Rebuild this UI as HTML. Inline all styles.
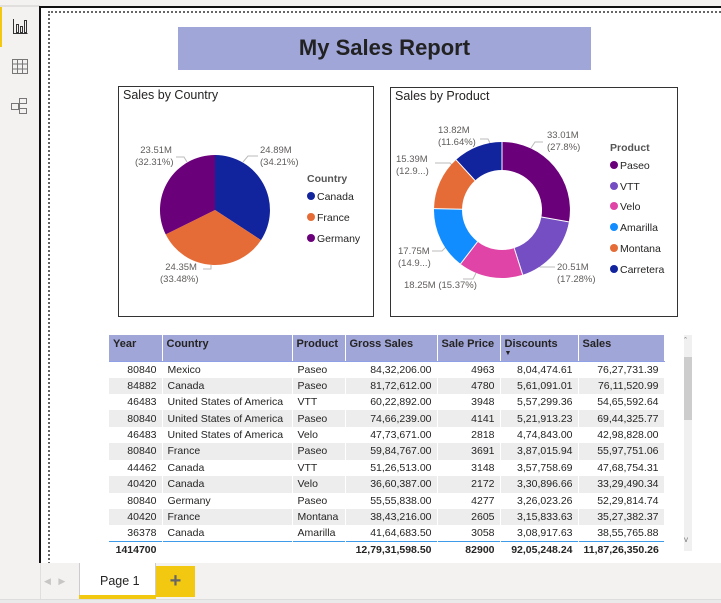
<!DOCTYPE html>
<html><head><meta charset="utf-8"><style>
*{margin:0;padding:0;box-sizing:border-box}
body{width:721px;height:603px;overflow:hidden;background:#f3f2f1;font-family:"Liberation Sans",sans-serif;position:relative;color:#252423}
.a{position:absolute}
.lbl{font-size:9.5px;color:#605e5c;line-height:12px;position:absolute;white-space:nowrap}
.leg{font-size:10.5px;position:absolute;white-space:nowrap}
.dot{display:inline-block;width:8px;height:8px;border-radius:50%;margin-right:2px;vertical-align:-0px}
table{border-collapse:collapse;font-size:10.5px;position:absolute;left:109px;top:335px;width:555px;table-layout:fixed}
th{background:#a0a6d8;text-align:left;font-weight:bold;height:26px;vertical-align:top;padding:3px 3px 0 4px;border-right:1px solid #fff;border-bottom:1px solid #8fa0e6;font-size:11px;white-space:nowrap;overflow:hidden;position:relative}
td{height:16.45px;padding:0 5px;white-space:nowrap;overflow:hidden;line-height:16px;border-right:1px solid #fff}
tr:nth-child(even) td{background:#ededed}
.r{text-align:right}
tfoot td{font-weight:bold;border-top:1.5px solid #3d9bea;background:#fff!important;height:16px}
</style></head><body>
<div class="a" style="left:0;top:0;width:721px;height:6px;background:#f3f2f1"></div>
<div class="a" style="left:0;top:5px;width:40px;height:2px;background:#e1dfdd"></div>
<div class="a" style="left:0;top:7px;width:2px;height:40px;background:#f2c811"></div>
<svg class="a" style="left:10px;top:16px" width="20" height="110" viewBox="0 0 20 110">
<g fill="none" stroke="#333" stroke-width="1">
<path d="M3.5 3v14.5h14"/><rect x="6.5" y="8.5" width="2" height="8"/><rect x="10.5" y="10.5" width="2" height="6"/><rect x="14.5" y="4.5" width="2" height="12"/>
</g>
<g fill="none" stroke="#777" stroke-width="1">
<rect x="2.5" y="43.5" width="15" height="14"/><path d="M2.5 48h15M2.5 53h15M7.5 43.5v14M12.5 43.5v14"/>
<rect x="1.5" y="87.5" width="7" height="6"/><rect x="9.5" y="82.5" width="7" height="5"/><rect x="9.5" y="92.5" width="7" height="5"/><path d="M8.5 90.5h1M9.5 85v10"/>
</g></svg>
<div class="a" style="left:39px;top:6px;width:682px;height:557px;background:#fff;border-left:2px solid #111;border-top:2px solid #111"></div>
<div class="a" style="left:48px;top:11px;width:680px;height:560px;border-left:2px dotted #666;border-top:2px dotted #666"></div>
<div class="a" style="left:178px;top:27px;width:413px;height:43px;background:#a0a6d8;text-align:center;font-weight:bold;font-size:22px;line-height:42px;color:#222">My Sales Report</div>
<div class="a" style="left:118px;top:86px;width:256px;height:231px;border:1px solid #333"></div>
<div class="a" style="left:123px;top:88px;font-size:12.5px;color:#252423">Sales by Country</div>
<svg class="a" style="left:0;top:0" width="721" height="603">
<path d="M215 210L215 155A55 55 0 0 1 261 240.1Z" fill="#12239e"/>
<path d="M215 210L261 240.1A55 55 0 0 1 165.7 234.4Z" fill="#e66c37"/>
<path d="M215 210L165.7 234.4A55 55 0 0 1 215 155Z" fill="#6b007b"/>
<g fill="none" stroke="#bbb" stroke-width="1">
<path d="M243 162l5-6h10"/><path d="M187 162l-3-5h-8"/><path d="M211 265v4h-8"/>
<path d="M531 148l4-6h8"/><path d="M490 143l-2-4h-8"/><path d="M455 168l-5-5h-15"/><path d="M447 246l-5 5h-10"/><path d="M476 273l-3 6h-10"/><path d="M535 261l5 6h15"/>
</g>
<path d="M502 142A68 68 0 0 1 568.9 221.9L541.4 217A40 40 0 0 0 502 170Z" fill="#6b007b"/>
<path d="M568.9 221.9A68 68 0 0 1 522.7 274.8L514.2 248.1A40 40 0 0 0 541.4 217Z" fill="#744ec2"/>
<path d="M522.7 274.8A68 68 0 0 1 460.5 263.9L477.6 241.7A40 40 0 0 0 514.2 248.1Z" fill="#e044a7"/>
<path d="M460.5 263.9A68 68 0 0 1 434 208.6L462 209.2A40 40 0 0 0 477.6 241.7Z" fill="#118dff"/>
<path d="M434 208.6A68 68 0 0 1 456.1 159.8L475 180.5A40 40 0 0 0 462 209.2Z" fill="#e66c37"/>
<path d="M456.1 159.8A68 68 0 0 1 502 142L502 170A40 40 0 0 0 475 180.5Z" fill="#12239e"/>
<g stroke="#fff" stroke-width="1"><path d="M502 142V170M568.9 221.9L541.4 217M522.7 274.8L514.2 248.1M460.5 263.9L477.6 241.7M434 208.6L462 209.2M456.1 159.8L475 180.5"/></g>
</svg>
<div class="lbl" style="left:260px;top:145px">24.89M<br>(34.21%)</div>
<div class="lbl" style="left:135px;top:145px">&nbsp;&nbsp;23.51M<br>(32.31%)</div>
<div class="lbl" style="left:160px;top:262px">&nbsp;&nbsp;24.35M<br>(33.48%)</div>
<div class="leg" style="left:307px;top:173px;font-weight:bold;color:#555">Country</div>
<div class="leg" style="left:307px;top:191px"><span class="dot" style="background:#12239e"></span>Canada</div>
<div class="leg" style="left:307px;top:212px"><span class="dot" style="background:#e66c37"></span>France</div>
<div class="leg" style="left:307px;top:233px"><span class="dot" style="background:#6b007b"></span>Germany</div>
<div class="a" style="left:390px;top:87px;width:288px;height:230px;border:1px solid #333"></div>
<div class="a" style="left:395px;top:89px;font-size:12.5px">Sales by Product</div>
<div class="lbl" style="left:547px;top:130px">33.01M<br>(27.8%)</div>
<div class="lbl" style="left:438px;top:125px">13.82M<br>(11.64%)</div>
<div class="lbl" style="left:396px;top:154px">15.39M<br>(12.9...)</div>
<div class="lbl" style="left:398px;top:246px">17.75M<br>(14.9...)</div>
<div class="lbl" style="left:404px;top:280px">18.25M (15.37%)</div>
<div class="lbl" style="left:557px;top:262px">20.51M<br>(17.28%)</div>
<div class="leg" style="left:610px;top:142px;font-weight:bold;color:#555">Product</div>
<div class="leg" style="left:610px;top:160px"><span class="dot" style="background:#6b007b"></span>Paseo</div>
<div class="leg" style="left:610px;top:181px"><span class="dot" style="background:#744ec2"></span>VTT</div>
<div class="leg" style="left:610px;top:201px"><span class="dot" style="background:#e044a7"></span>Velo</div>
<div class="leg" style="left:610px;top:222px"><span class="dot" style="background:#118dff"></span>Amarilla</div>
<div class="leg" style="left:610px;top:243px"><span class="dot" style="background:#e66c37"></span>Montana</div>
<div class="leg" style="left:610px;top:264px"><span class="dot" style="background:#12239e"></span>Carretera</div>
<table>
<colgroup><col style="width:53px"><col style="width:130px"><col style="width:53px"><col style="width:92px"><col style="width:63px"><col style="width:78px"><col style="width:86px"></colgroup>
<thead><tr><th>Year</th><th>Country</th><th>Product</th><th>Gross Sales</th><th>Sale Price</th><th>Discounts<span style="font-size:7px;position:absolute;left:4px;top:15px">&#9660;</span></th><th>Sales</th></tr></thead>
<tbody>
<tr><td class="r">80840</td><td>Mexico</td><td>Paseo</td><td class="r">84,32,206.00</td><td class="r">4963</td><td class="r">8,04,474.61</td><td class="r">76,27,731.39</td></tr>
<tr><td class="r">84882</td><td>Canada</td><td>Paseo</td><td class="r">81,72,612.00</td><td class="r">4780</td><td class="r">5,61,091.01</td><td class="r">76,11,520.99</td></tr>
<tr><td class="r">46483</td><td>United States of America</td><td>VTT</td><td class="r">60,22,892.00</td><td class="r">3948</td><td class="r">5,57,299.36</td><td class="r">54,65,592.64</td></tr>
<tr><td class="r">80840</td><td>United States of America</td><td>Paseo</td><td class="r">74,66,239.00</td><td class="r">4141</td><td class="r">5,21,913.23</td><td class="r">69,44,325.77</td></tr>
<tr><td class="r">46483</td><td>United States of America</td><td>Velo</td><td class="r">47,73,671.00</td><td class="r">2818</td><td class="r">4,74,843.00</td><td class="r">42,98,828.00</td></tr>
<tr><td class="r">80840</td><td>France</td><td>Paseo</td><td class="r">59,84,767.00</td><td class="r">3691</td><td class="r">3,87,015.94</td><td class="r">55,97,751.06</td></tr>
<tr><td class="r">44462</td><td>Canada</td><td>VTT</td><td class="r">51,26,513.00</td><td class="r">3148</td><td class="r">3,57,758.69</td><td class="r">47,68,754.31</td></tr>
<tr><td class="r">40420</td><td>Canada</td><td>Velo</td><td class="r">36,60,387.00</td><td class="r">2172</td><td class="r">3,30,896.66</td><td class="r">33,29,490.34</td></tr>
<tr><td class="r">80840</td><td>Germany</td><td>Paseo</td><td class="r">55,55,838.00</td><td class="r">4277</td><td class="r">3,26,023.26</td><td class="r">52,29,814.74</td></tr>
<tr><td class="r">40420</td><td>France</td><td>Montana</td><td class="r">38,43,216.00</td><td class="r">2605</td><td class="r">3,15,833.63</td><td class="r">35,27,382.37</td></tr>
<tr><td class="r">36378</td><td>Canada</td><td>Amarilla</td><td class="r">41,64,683.50</td><td class="r">3058</td><td class="r">3,08,917.63</td><td class="r">38,55,765.88</td></tr>
</tbody>
<tfoot><tr><td class="r">1414700</td><td></td><td></td><td class="r">12,79,31,598.50</td><td class="r">82900</td><td class="r">92,05,248.24</td><td class="r">11,87,26,350.26</td></tr></tfoot>
</table>
<div class="a" style="left:684px;top:335px;width:8px;height:216px;background:#f0f0f0"></div>
<div class="a" style="left:684px;top:357px;width:8px;height:63px;background:#cdcdcd"></div>
<div class="a" style="left:684px;top:336px;font-size:9px;color:#777">&#710;</div>
<div class="a" style="left:684px;top:535px;font-size:8px;color:#777">v</div>
<div class="a" style="left:0;top:563px;width:721px;height:40px;background:#f3f2f1"></div>
<div class="a" style="left:40px;top:563px;width:1px;height:36px;background:#e1dfdd"></div>
<div class="a" style="left:0;top:599px;width:721px;height:4px;background:#eaeaea;border-top:1px solid #ddd"></div>
<div class="a" style="left:44px;top:576px;font-size:9px;color:#c8c6c4">&#9664;&nbsp;&nbsp;&nbsp;&#9654;</div>
<div class="a" style="left:79px;top:563px;width:77px;height:36px;background:#fff;border-left:1px solid #ccc;border-right:1px solid #ccc"></div>
<div class="a" style="left:79px;top:595px;width:77px;height:4px;background:#f2c811"></div>
<div class="a" style="left:100px;top:574px;font-size:12.5px;color:#252423">Page 1</div>
<div class="a" style="left:156px;top:566px;width:39px;height:31px;background:#f2c811;color:#666;font-size:20px;font-weight:bold;text-align:center;line-height:31px">+</div>
</body></html>
